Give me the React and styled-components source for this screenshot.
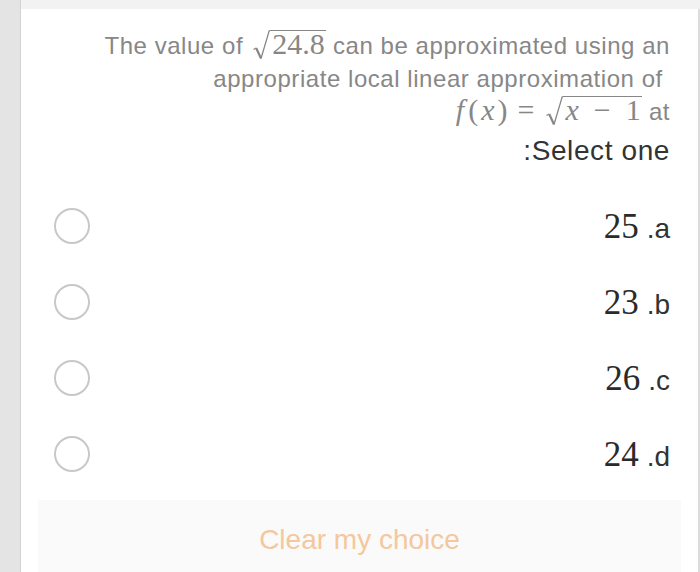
import React from 'react';
import styled, { createGlobalStyle } from 'styled-components';

const GlobalStyle = createGlobalStyle`
  html, body {
    margin: 0;
    padding: 0;
    background: #e5e5e5;
  }
  body {
    font-family: "Liberation Sans", Arial, sans-serif;
  }
`;

const Page = styled.div`
  display: flex;
  width: 700px;
  height: 572px;
  overflow: hidden;
`;

const Gutter = styled.div`
  width: 20px;
  flex-shrink: 0;
  background: #e4e4e4;
  border-right: 1px solid #d2d2d2;
`;

const Main = styled.div`
  flex: 1;
  display: flex;
  flex-direction: column;
  min-width: 0;
`;

const TopBar = styled.div`
  height: 9px;
  background: #f2f2f2;
`;

const Card = styled.div`
  flex: 1;
  background: #ffffff;
  border-right: 2px solid #dcdcdc;
  padding-top: 20px;
  overflow: hidden;
`;

const Question = styled.div`
  padding-right: 28px;
  text-align: right;
  color: #878787;
  font-size: 24px;
  letter-spacing: 0.55px;
`;

const Line = styled.div`
  line-height: 33px;
  white-space: nowrap;
`;

const MathText = styled.span`
  font-family: "Liberation Serif", "Times New Roman", serif;
  font-size: 30px;
  line-height: 1;
  letter-spacing: 0;
  font-style: ${(p) => (p.$italic ? 'italic' : 'normal')};
  margin: ${(p) => p.$space || '0'};
`;

const SqrtWrap = styled.span`
  white-space: nowrap;
  letter-spacing: 0;
`;

const RadicalSvg = styled.svg`
  width: 17px;
  height: 30px;
  vertical-align: -6px;
  margin-left: 3px;
`;

const Radicand = styled.span`
  display: inline-block;
  font-family: "Liberation Serif", "Times New Roman", serif;
  font-size: 30px;
  line-height: 0.8;
  padding: 1px 1px 0 2px;
  border-top: 1.5px solid currentColor;
`;

const Radical = ({ children }) => (
  <SqrtWrap>
    <RadicalSvg viewBox="0 0 17 30">
      <path d="M0.5 19.5 L3.2 18" stroke="currentColor" strokeWidth="1.2" fill="none" />
      <path d="M3.2 18 L8 28.5" stroke="currentColor" strokeWidth="2.2" fill="none" />
      <path d="M8 28.5 L16.2 0.8 L17 0.8" stroke="currentColor" strokeWidth="1.3" fill="none" />
    </RadicalSvg>
    <Radicand>{children}</Radicand>
  </SqrtWrap>
);

const Prompt = styled.div`
  margin-top: 5px;
  padding-right: 28px;
  text-align: right;
  font-size: 28px;
  line-height: 36px;
  letter-spacing: 0.6px;
  color: #333333;
`;

const Options = styled.div`
  margin-top: 19px;
  padding: 0 28px 0 33px;
`;

const OptionRow = styled.label`
  display: flex;
  align-items: center;
  justify-content: space-between;
  height: 76px;
`;

const RadioCircle = styled.span`
  width: 32px;
  height: 32px;
  border: 2px solid #c8c8c8;
  border-radius: 50%;
  flex-shrink: 0;
`;

const Answer = styled.span`
  display: flex;
  align-items: baseline;
  gap: 8px;
  color: #2a2a2a;
`;

const Num = styled.span`
  font-family: "Liberation Serif", "Times New Roman", serif;
  font-size: 35px;
  line-height: 1;
`;

const Letter = styled.span`
  font-size: 28px;
  line-height: 1;
  color: #333333;
`;

const ClearBox = styled.div`
  margin: 8px 17px 0 17px;
  height: 80px;
  background: #fafafa;
  display: flex;
  align-items: center;
  justify-content: center;
  font-size: 28px;
  color: #f4c79d;
`;

const options = [
  { value: '25', letter: '.a' },
  { value: '23', letter: '.b' },
  { value: '26', letter: '.c' },
  { value: '24', letter: '.d' },
];

const App = () => (
  <>
    <GlobalStyle />
    <Page>
      <Gutter />
      <Main>
        <TopBar />
        <Card>
          <Question>
            <Line>
              The value of <Radical>24.8</Radical> can be approximated using an
            </Line>
            <Line>appropriate local linear approximation of&nbsp;</Line>
            <Line>
              <MathText $italic $space="0 3px 0 0">f</MathText>
              <MathText $space="0 1px">(</MathText>
              <MathText $italic $space="0 2px">x</MathText>
              <MathText $space="0 1px">)</MathText>
              <MathText $space="0 9px">=</MathText>
              <Radical>
                <i>x</i>&nbsp;&nbsp;−&nbsp;&nbsp;1
              </Radical>{' '}
              at
            </Line>
          </Question>
          <Prompt>:Select one</Prompt>
          <Options>
            {options.map((o) => (
              <OptionRow key={o.letter}>
                <RadioCircle />
                <Answer>
                  <Num>{o.value}</Num>
                  <Letter>{o.letter}</Letter>
                </Answer>
              </OptionRow>
            ))}
          </Options>
          <ClearBox>Clear my choice</ClearBox>
        </Card>
      </Main>
    </Page>
  </>
);

export default App;
